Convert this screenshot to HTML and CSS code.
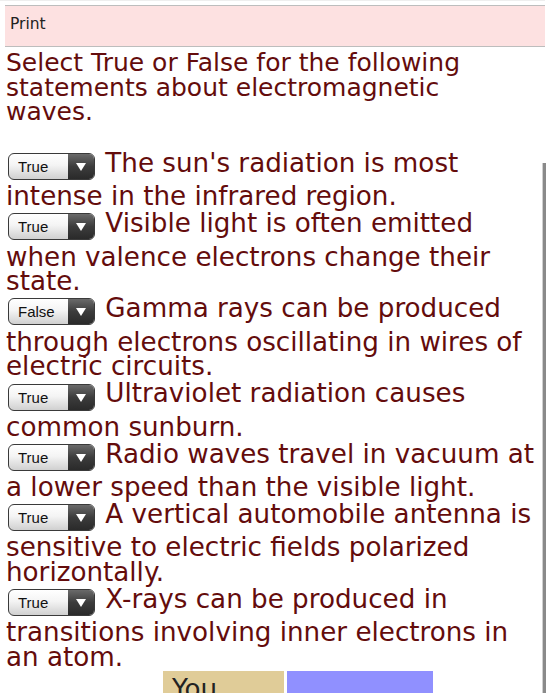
FILE: index.html
```html
<!DOCTYPE html>
<html>
<head>
<meta charset="utf-8">
<link rel="stylesheet" href="styles.css">
</head>
<body>
<div class="topline"></div>
<div class="printbar">Print</div>
<div class="content">
  <div class="heading">Select True or False for the following<br>statements about electromagnetic<br>waves.</div>
  <div class="questions">
    <div class="q"><span class="sel"><span class="sel-val">True</span><span class="sel-btn"></span></span> The sun's radiation is most<br>intense in the infrared region.</div>
    <div class="q"><span class="sel"><span class="sel-val">True</span><span class="sel-btn"></span></span> Visible light is often emitted<br>when valence electrons change their<br>state.</div>
    <div class="q"><span class="sel"><span class="sel-val">False</span><span class="sel-btn"></span></span> Gamma rays can be produced<br>through electrons oscillating in wires of<br>electric circuits.</div>
    <div class="q"><span class="sel"><span class="sel-val">True</span><span class="sel-btn"></span></span> Ultraviolet radiation causes<br>common sunburn.</div>
    <div class="q"><span class="sel"><span class="sel-val">True</span><span class="sel-btn"></span></span> Radio waves travel in vacuum at<br>a lower speed than the visible light.</div>
    <div class="q"><span class="sel"><span class="sel-val">True</span><span class="sel-btn"></span></span> A vertical automobile antenna is<br>sensitive to electric fields polarized<br>horizontally.</div>
    <div class="q"><span class="sel"><span class="sel-val">True</span><span class="sel-btn"></span></span> X-rays can be produced in<br>transitions involving inner electrons in<br>an atom.</div>
  </div>
  <div class="result">
    <div class="cell cell-you">You</div>
    <div class="cell cell-blue"></div>
  </div>
</div>
<div class="scrollbar"></div>
</body>
</html>
```
FILE: styles.css
```css
html, body {
  margin: 0;
  padding: 0;
  background: #ffffff;
  overflow: hidden;
}
body {
  width: 551px;
  height: 693px;
  position: relative;
  font-family: "DejaVu Sans", Verdana, sans-serif;
}
.topline {
  height: 5px;
  border-top: 1px solid #eeeeee;
  box-sizing: border-box;
  width: 545px;
}
.printbar {
  margin-left: 5px;
  width: 540px;
  height: 42px;
  box-sizing: border-box;
  background: #fde1e1;
  border-top: 1px solid #bdbdbd;
  border-bottom: 1px solid #bdbdbd;
  padding: 8px 0 0 5px;
  font-size: 15.5px;
  line-height: 20px;
  color: #222222;
}
.content {
  padding: 4px 0 0 6px;
  color: #640c0c;
  font-size: 26.2px;
  line-height: 24.8px;
  white-space: nowrap;
}
.heading {
  font-size: 25px;
  line-height: 24.6px;
}
.questions {
  margin-top: 24px;
}
.q {
  margin: 0;
}
.sel {
  display: inline-flex;
  align-items: stretch;
  width: 87px;
  height: 27px;
  box-sizing: border-box;
  border: 1px solid #3a3a3a;
  border-radius: 6px;
  overflow: hidden;
  vertical-align: baseline;
  margin: 4.3px 2px 4.2px 2px;
  background: linear-gradient(#ffffff, #f4f4f4 45%, #d0d0d0);
  font-family: "Liberation Sans", Arial, sans-serif;
  font-size: 15px;
  line-height: 25px;
  color: #111111;
}
.sel-val {
  flex: 1;
  padding-left: 9px;
}
.sel-btn {
  position: relative;
  width: 26px;
  background: linear-gradient(#6a6a6a, #3c3c3c 50%, #2a2a2a);
}
.sel-btn::after {
  content: "";
  position: absolute;
  left: 8px;
  top: 9px;
  border-left: 5px solid transparent;
  border-right: 5px solid transparent;
  border-top: 8px solid #ffffff;
}
.result {
  display: flex;
  gap: 3px;
  margin-left: 157px;
  margin-top: 1px;
}
.cell {
  height: 40px;
  box-sizing: border-box;
  padding: 6px 0 0 9px;
  color: #222222;
}
.cell-you {
  width: 121px;
  background: #e0cc98;
}
.cell-blue {
  width: 146px;
  background: #9090ff;
}
.scrollbar {
  position: absolute;
  left: 542px;
  top: 163px;
  width: 3px;
  height: 540px;
  background: #8a8a8a;
  border-left: 1px solid #d0d0d0;
}
```
